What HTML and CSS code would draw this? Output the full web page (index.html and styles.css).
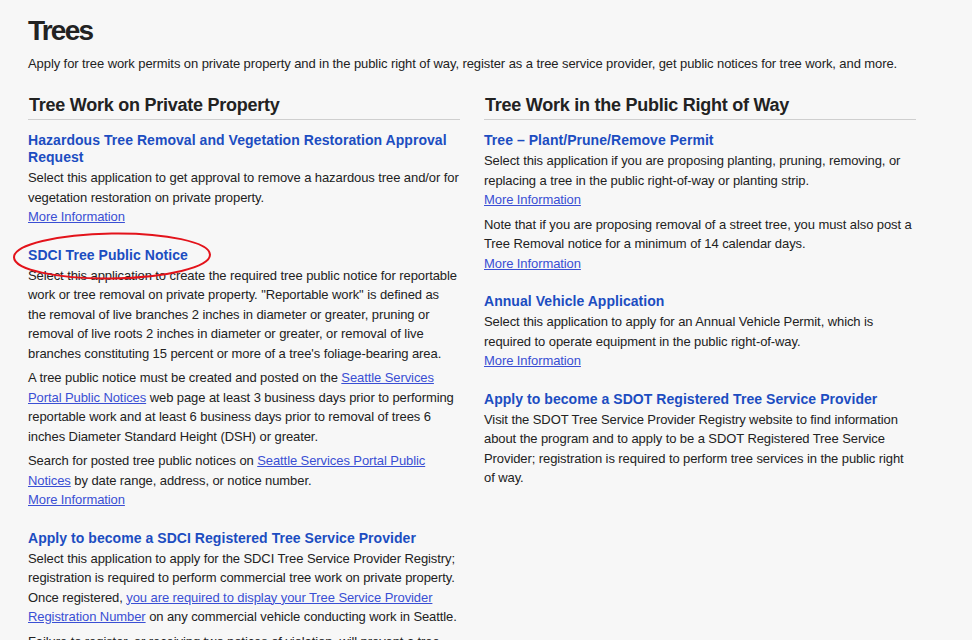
FILE: index.html
```html
<!DOCTYPE html>
<html lang="en">
<head>
<meta charset="utf-8">
<title>Trees</title>
<link rel="stylesheet" href="styles.css">
</head>
<body>
<main class="page">
  <h1 class="title">Trees</h1>
  <p class="intro">Apply for tree work permits on private property and in the public right of way, register as a tree service provider, get public notices for tree work, and more.</p>

  <div class="columns">
    <section class="col">
      <h2 class="col-title">Tree Work on Private Property</h2>

      <div class="item">
        <h3 class="item-title"><a href="#">Hazardous Tree Removal and Vegetation Restoration Approval Request</a></h3>
        <p>Select this application to get approval to remove a hazardous tree and/or for vegetation restoration on private property.<br><a class="link" href="#">More Information</a></p>
      </div>

      <div class="item item-marked">
        <h3 class="item-title"><a href="#">SDCI Tree Public Notice</a></h3>
        <svg class="ring" width="204" height="52" viewBox="0 0 204 52" aria-hidden="true">
          <ellipse cx="102" cy="26" rx="98" ry="22.5" fill="none" stroke="#e3131b" stroke-width="2" transform="rotate(-0.8 102 26)"/>
        </svg>
        <p>Select this application to create the required tree public notice for reportable work or tree removal on private property. "Reportable work" is defined as the removal of live branches 2 inches in diameter or greater, pruning or removal of live roots 2 inches in diameter or greater, or removal of live branches constituting 15 percent or more of a tree's foliage-bearing area.</p>
        <p>A tree public notice must be created and posted on the <a class="link" href="#">Seattle Services Portal Public Notices</a> web page at least 3 business days prior to performing reportable work and at least 6 business days prior to removal of trees 6 inches Diameter Standard Height (DSH) or greater.</p>
        <p>Search for posted tree public notices on <a class="link" href="#">Seattle Services Portal Public Notices</a> by date range, address, or notice number.<br><a class="link" href="#">More Information</a></p>
      </div>

      <div class="item">
        <h3 class="item-title"><a href="#">Apply to become a SDCI Registered Tree Service Provider</a></h3>
        <p>Select this application to apply for the SDCI Tree Service Provider Registry; registration is required to perform commercial tree work on private property. Once registered, <a class="link" href="#">you are required to display your Tree Service Provider Registration Number</a> on any commercial vehicle conducting work in Seattle.</p>
        <p>Failure to register, or receiving two notices of violation, will prevent a tree service provider from performing tree work in Seattle.</p>
      </div>
    </section>

    <section class="col">
      <h2 class="col-title">Tree Work in the Public Right of Way</h2>

      <div class="item">
        <h3 class="item-title"><a href="#">Tree – Plant/Prune/Remove Permit</a></h3>
        <p>Select this application if you are proposing planting, pruning, removing, or replacing a tree in the public right-of-way or planting strip.<br><a class="link" href="#">More Information</a></p>
        <p>Note that if you are proposing removal of a street tree, you must also post a Tree Removal notice for a minimum of 14 calendar days.<br><a class="link" href="#">More Information</a></p>
      </div>

      <div class="item">
        <h3 class="item-title"><a href="#">Annual Vehicle Application</a></h3>
        <p>Select this application to apply for an Annual Vehicle Permit, which is required to operate equipment in the public right-of-way.<br><a class="link" href="#">More Information</a></p>
      </div>

      <div class="item">
        <h3 class="item-title"><a href="#">Apply to become a SDOT Registered Tree Service Provider</a></h3>
        <p>Visit the SDOT Tree Service Provider Registry website to find information about the program and to apply to be a SDOT Registered Tree Service Provider; registration is required to perform tree services in the public right of way.</p>
      </div>
    </section>
  </div>
</main>
</body>
</html>
```

FILE: styles.css
```css
html, body {
  margin: 0;
  padding: 0;
  background: #f7f7f7;
}

body {
  font-family: "Liberation Sans", Arial, sans-serif;
  font-size: 13px;
  letter-spacing: -0.085px;
  color: #222;
}

.page {
  padding: 14px 28px 0 28px;
  width: 888px;
}

.title {
  margin: 0;
  font-size: 28px;
  line-height: 34px;
  font-weight: bold;
  letter-spacing: -1.8px;
  color: #222;
}

.intro {
  margin: 6px 0 0 0;
  line-height: 20px;
}

.columns {
  display: grid;
  grid-template-columns: 432px 432px;
  column-gap: 24px;
  margin-top: 19px;
}

.col-title {
  margin: 0;
  font-size: 18px;
  line-height: 22px;
  font-weight: bold;
  letter-spacing: -0.25px;
  color: #222;
  padding: 1px 0 3px 1px;
  border-bottom: 1px solid #cfcfcf;
}

.item {
  margin-top: 0;
  margin-bottom: 20px;
}

.col-title + .item {
  margin-top: 12px;
}

.item-marked {
  position: relative;
}

.ring {
  position: absolute;
  left: -18px;
  top: -17px;
}

.item-title {
  margin: 0 0 2px 0;
  font-size: 14px;
  line-height: 17px;
  font-weight: bold;
  letter-spacing: 0.05px;
}

.item-title a {
  color: #1c4dc1;
  text-decoration: none;
}

.item p {
  margin: 0 0 5px 0;
  line-height: 19.5px;
}

.link {
  color: #3a4fd4;
  text-decoration: underline;
}
```
